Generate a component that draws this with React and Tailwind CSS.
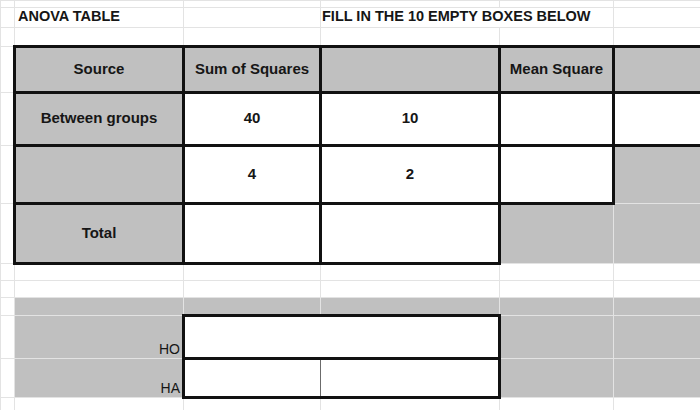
import React from 'react'

const widths = [14, 169, 137, 179, 114, 87]

// thick (black) or thin (gridline) per side, written out in full for tailwind
const side = {
  t: ['border-t border-t-[#e3e3e3]', 'border-t-[3px] border-t-[#111]'],
  r: ['border-r border-r-[#e3e3e3]', 'border-r-[3px] border-r-[#111]'],
  b: ['border-b border-b-[#e3e3e3]', 'border-b-[3px] border-b-[#111]'],
  l: ['border-l border-l-[#e3e3e3]', 'border-l-[3px] border-l-[#111]'],
}

function Cell({ t, r, b, l, gray, colSpan, className = '', children }) {
  const cls = [
    side.t[t ? 1 : 0],
    side.r[r ? 1 : 0],
    side.b[b ? 1 : 0],
    side.l[l ? 1 : 0],
    gray ? 'bg-[#c0c0c0]' : 'bg-white',
    'p-0 align-middle leading-none',
    className,
  ].join(' ')
  return (
    <td colSpan={colSpan} className={cls}>
      {children}
    </td>
  )
}

const Head = ({ children }) => (
  <div className="pb-[2px] text-center text-[15px] leading-[18px] font-bold text-[#161616]">{children}</div>
)

function Blank({ h, gray }) {
  return (
    <tr className={h}>
      <Cell />
      <Cell gray={gray} />
      <Cell gray={gray} />
      <Cell gray={gray} />
      <Cell gray={gray} />
      <Cell gray={gray} />
    </tr>
  )
}

export default function App() {
  const box = { t: true, r: true, b: true, l: true }

  return (
    <div className="w-[700px] h-[410px] overflow-hidden bg-white font-['Liberation_Sans',Arial,sans-serif] text-[#161616]">
      <table className="table-fixed w-[700px] border-collapse">
        <colgroup>
          {widths.map((w, i) => (
            <col key={i} style={{ width: w }} />
          ))}
        </colgroup>
        <tbody>
          <Blank h="h-[7px]" />

          {/* title row */}
          <tr className="h-[20px]">
            <Cell />
            <Cell className="pl-[3px] pb-[3px] whitespace-nowrap text-[14.5px] !leading-[16px] font-bold">ANOVA TABLE</Cell>
            <Cell />
            <Cell colSpan={2} className="pl-[1px] pb-[3px] whitespace-nowrap text-[14.5px] !leading-[16px] font-bold">
              FILL IN THE 10 EMPTY BOXES BELOW
            </Cell>
            <Cell />
          </tr>

          <Blank h="h-[19px]" />

          {/* header */}
          <tr className="h-[46px]">
            <Cell />
            <Cell gray {...box}><Head>Source</Head></Cell>
            <Cell gray {...box}><Head>Sum of Squares</Head></Cell>
            <Cell gray {...box} />
            <Cell gray {...box}><Head>Mean Square</Head></Cell>
            <Cell gray t b l />
          </tr>

          <tr className="h-[53px]">
            <Cell />
            <Cell gray {...box}><Head>Between groups</Head></Cell>
            <Cell {...box}><Head>40</Head></Cell>
            <Cell {...box}><Head>10</Head></Cell>
            <Cell {...box} />
            <Cell t b l />
          </tr>

          <tr className="h-[58px]">
            <Cell />
            <Cell gray {...box} />
            <Cell {...box}><Head>4</Head></Cell>
            <Cell {...box}><Head>2</Head></Cell>
            <Cell {...box} />
            <Cell gray t l />
          </tr>

          <tr className="h-[60px]">
            <Cell />
            <Cell gray {...box}><Head>Total</Head></Cell>
            <Cell {...box} />
            <Cell {...box} />
            <Cell gray t l />
            <Cell gray />
          </tr>

          <Blank h="h-[17px]" />
          <Blank h="h-[17px]" />
          <Blank h="h-[18px]" gray />

          {/* hypotheses */}
          <tr className="h-[43px]">
            <Cell />
            <Cell gray r className="!align-bottom text-right text-[14px] !leading-[16px] pb-[1px] pr-[2px]">HO</Cell>
            <Cell colSpan={2} {...box} />
            <Cell gray l />
            <Cell gray />
          </tr>

          <tr className="h-[39px]">
            <Cell />
            <Cell gray r className="!align-bottom text-right text-[14px] !leading-[16px] pb-[1px] pr-[2px]">HA</Cell>
            <Cell t b l className="!border-r !border-r-[#6b6b6b]" />
            <Cell t r b />
            <Cell gray l />
            <Cell gray />
          </tr>

          <Blank h="h-[13px]" />
        </tbody>
      </table>
    </div>
  )
}
